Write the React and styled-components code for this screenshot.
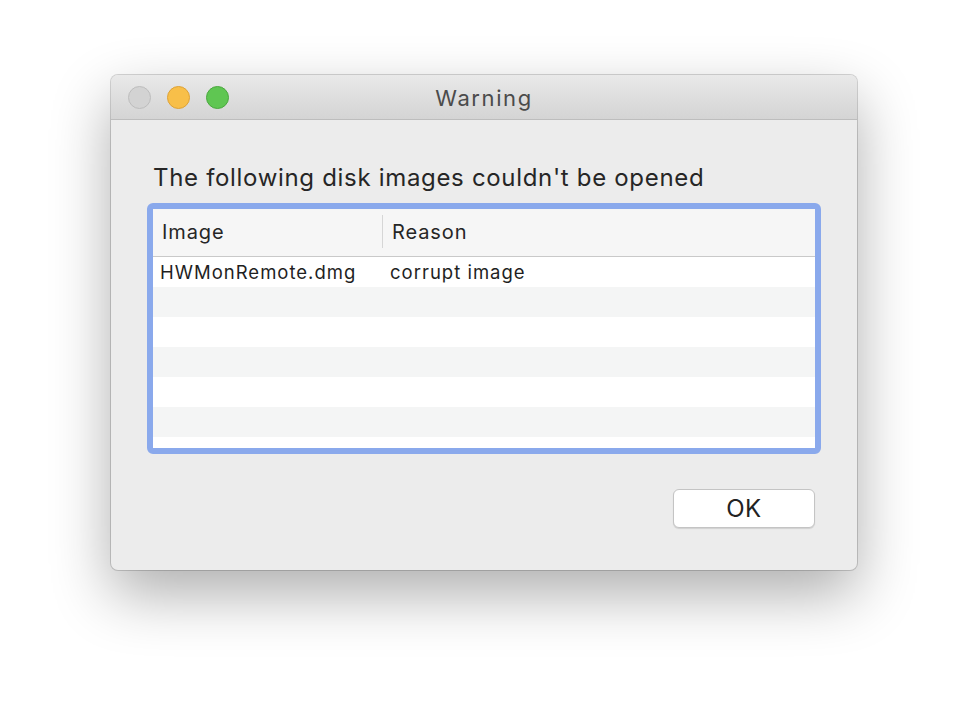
import React from 'react';
import styled, { createGlobalStyle } from 'styled-components';

const GlobalStyle = createGlobalStyle`
  html, body {
    margin: 0;
    background: #ffffff;
  }
  body {
    font-family: Inter, "Liberation Sans", sans-serif;
  }
`

const Page = styled.div`
  width: 968px;
  height: 718px;
  padding: 75px 0 0 111px;
  box-sizing: border-box;
  overflow: hidden;
`

const Window = styled.div`
  width: 746px;
  height: 495px;
  display: flex;
  flex-direction: column;
  background: #ececec;
  border-radius: 7px;
  overflow: hidden;
  box-shadow: 0 0 0 1px rgba(0, 0, 0, 0.16), 0 24px 60px rgba(0, 0, 0, 0.32);
`

const TitleBar = styled.div`
  position: relative;
  height: 44px;
  flex-shrink: 0;
  display: flex;
  align-items: center;
  justify-content: center;
  background: linear-gradient(#e9e9e9, #d4d4d4);
  border-bottom: 1px solid #bdbdbd;
`

const Lights = styled.div`
  position: absolute;
  left: 17px;
  top: 11px;
  display: flex;
  gap: 16px;
`

const Light = styled.span`
  width: 23px;
  height: 23px;
  border-radius: 50%;
  box-sizing: border-box;
  background: ${p => p.color};
  border: 1px solid ${p => p.edge};
`

const Title = styled.div`
  font-size: 22px;
  letter-spacing: 1.6px;
  color: #4b4b4b;
  margin-top: 2px;
`

const Body = styled.div`
  flex: 1;
  display: flex;
  flex-direction: column;
  padding: 42px 36px 0 36px;
`

const Message = styled.div`
  font-size: 24px;
  letter-spacing: 0.68px;
  color: #262626;
  margin-left: 6px;
  line-height: 32px;
`

const TableFrame = styled.div`
  margin-top: 9px;
  width: 674px;
  height: 251px;
  box-sizing: border-box;
  border: 6px solid #8aa9ec;
  border-radius: 6px;
  background: #ffffff;
  overflow: hidden;
  display: flex;
  flex-direction: column;
`

const HeaderRow = styled.div`
  display: flex;
  height: 47px;
  flex-shrink: 0;
  background: #f6f6f6;
  border-bottom: 1px solid #c9c9c9;
`

const HeaderCell = styled.div`
  width: ${p => p.w || 'auto'};
  flex: ${p => (p.w ? 'none' : 1)};
  display: flex;
  align-items: center;
  padding-left: 9px;
  font-size: 20px;
  letter-spacing: 0.9px;
  color: #262626;
  box-sizing: border-box;
  border-right: ${p => (p.divider ? '1px solid #d6d6d6' : 'none')};
  margin: 6px 0 8px 0;
  padding-top: 1px;
`

const Row = styled.div`
  display: flex;
  height: 30px;
  flex-shrink: 0;
  background: ${p => (p.odd ? '#f4f5f5' : '#ffffff')};
`

const Cell = styled.div`
  width: ${p => p.w || 'auto'};
  flex: ${p => (p.w ? 'none' : 1)};
  display: flex;
  align-items: center;
  padding-left: ${p => p.pad || 7}px;
  font-size: 18.5px;
  letter-spacing: 1px;
  color: #1f1f1f;
  box-sizing: border-box;
`

const Footer = styled.div`
  display: flex;
  justify-content: flex-end;
  padding-right: 6px;
  margin-top: 35px;
`

const Button = styled.button`
  width: 142px;
  height: 39px;
  background: #ffffff;
  border: 1px solid #c4c4c4;
  border-radius: 6px;
  box-shadow: 0 1px 1px rgba(0, 0, 0, 0.12);
  font-family: inherit;
  font-size: 24px;
  letter-spacing: 0.5px;
  color: #222222;
  padding: 0;
`

const rows = [
  { name: 'HWMonRemote.dmg', reason: 'corrupt image' },
  {}, {}, {}, {}, {}, {},
]

const App = () => (
  <Page>
    <GlobalStyle />
    <Window>
      <TitleBar>
        <Lights>
          <Light color="#d3d3d3" edge="#bdbdbd" />
          <Light color="#f8bf49" edge="#dea236" />
          <Light color="#5fc652" edge="#4aa83e" />
        </Lights>
        <Title>Warning</Title>
      </TitleBar>
      <Body>
        <Message>The following disk images couldn't be opened</Message>
        <TableFrame>
          <HeaderRow>
            <HeaderCell w="230px" divider>Image</HeaderCell>
            <HeaderCell>Reason</HeaderCell>
          </HeaderRow>
          {rows.map((r, i) => (
            <Row key={i} odd={i % 2 === 1}>
              <Cell w="230px">{r.name}</Cell>
              <Cell pad={7}>{r.reason}</Cell>
            </Row>
          ))}
        </TableFrame>
        <Footer>
          <Button>OK</Button>
        </Footer>
      </Body>
    </Window>
  </Page>
)

export default App;
